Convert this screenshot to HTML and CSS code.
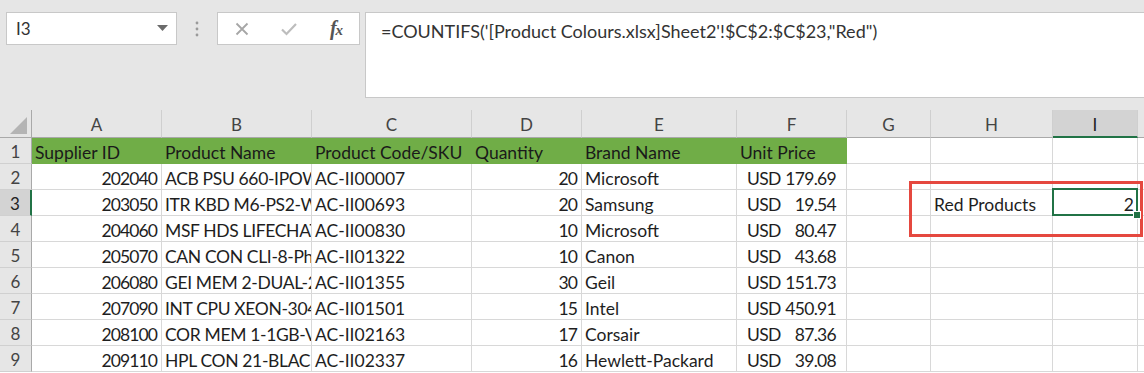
FILE: index.html
```html
<!DOCTYPE html>
<html>
<head>
<meta charset="utf-8">
<link rel="stylesheet" href="styles.css">
</head>
<body>
<div class="app">
  <div class="toolbar">
    <div class="namebox">
      <span class="nb-text">I3</span>
      <svg class="nb-arrow" width="11" height="6" viewBox="0 0 11 6"><polygon points="0,0 11,0 5.5,6" fill="#6b6b6b"/></svg>
    </div>
    <div class="sep">
      <svg width="4" height="16" viewBox="0 0 4 16"><circle cx="2" cy="2" r="1.4" fill="#9a9a9a"/><circle cx="2" cy="8" r="1.4" fill="#9a9a9a"/><circle cx="2" cy="14" r="1.4" fill="#9a9a9a"/></svg>
    </div>
    <div class="fxbar">
      <span class="fxbtn"><svg width="16" height="16" viewBox="0 0 16 16"><path d="M2.5 2.5 L13.5 13.5 M13.5 2.5 L2.5 13.5" stroke="#a6a6a6" stroke-width="1.8" fill="none"/></svg></span>
      <span class="fxbtn"><svg width="18" height="16" viewBox="0 0 18 16"><path d="M2 8.5 L6.5 13 L16 3" stroke="#bdbdbd" stroke-width="2.2" fill="none"/></svg></span>
      <span class="fxbtn fx">f<span class="fx-x">x</span></span>
    </div>
    <div class="formula">=COUNTIFS('[Product Colours.xlsx]Sheet2'!$C$2:$C$23,"Red")</div>
  </div>

  <div class="sheet">
    <div class="hd corner"><svg width="17" height="17" viewBox="0 0 17 17"><polygon points="17,0 17,17 0,17" fill="#b4b4b4"/></svg></div>
    <div class="hd col">A</div>
    <div class="hd col">B</div>
    <div class="hd col">C</div>
    <div class="hd col">D</div>
    <div class="hd col">E</div>
    <div class="hd col">F</div>
    <div class="hd col">G</div>
    <div class="hd col">H</div>
    <div class="hd col sel-col">I</div>
    <div class="hd col last"></div>

    <div class="hd row">1</div>
    <div class="c g">Supplier ID</div>
    <div class="c g">Product Name</div>
    <div class="c g">Product Code/SKU</div>
    <div class="c g">Quantity</div>
    <div class="c g">Brand Name</div>
    <div class="c g">Unit Price</div>
    <div class="c"></div><div class="c"></div><div class="c"></div><div class="c"></div>

    <div class="hd row">2</div>
    <div class="c r">202040</div><div class="c n">ACB PSU 660-IPOW</div><div class="c">AC-II00007</div><div class="c r">20</div><div class="c">Microsoft</div><div class="c acc"><span>USD</span><span>179.69</span></div>
    <div class="c"></div><div class="c"></div><div class="c"></div><div class="c"></div>

    <div class="hd row sel-row">3</div>
    <div class="c r">203050</div><div class="c n">ITR KBD M6-PS2-W</div><div class="c">AC-II00693</div><div class="c r">20</div><div class="c">Samsung</div><div class="c acc"><span>USD</span><span>19.54</span></div>
    <div class="c"></div><div class="c">Red Products</div><div class="c r active">2<span class="handle"></span></div><div class="c"></div>

    <div class="hd row">4</div>
    <div class="c r">204060</div><div class="c n">MSF HDS LIFECHAT</div><div class="c">AC-II00830</div><div class="c r">10</div><div class="c">Microsoft</div><div class="c acc"><span>USD</span><span>80.47</span></div>
    <div class="c"></div><div class="c"></div><div class="c"></div><div class="c"></div>

    <div class="hd row">5</div>
    <div class="c r">205070</div><div class="c n">CAN CON CLI-8-Ph</div><div class="c">AC-II01322</div><div class="c r">10</div><div class="c">Canon</div><div class="c acc"><span>USD</span><span>43.68</span></div>
    <div class="c"></div><div class="c"></div><div class="c"></div><div class="c"></div>

    <div class="hd row">6</div>
    <div class="c r">206080</div><div class="c n">GEI MEM 2-DUAL-2</div><div class="c">AC-II01355</div><div class="c r">30</div><div class="c">Geil</div><div class="c acc"><span>USD</span><span>151.73</span></div>
    <div class="c"></div><div class="c"></div><div class="c"></div><div class="c"></div>

    <div class="hd row">7</div>
    <div class="c r">207090</div><div class="c n">INT CPU XEON-304</div><div class="c">AC-II01501</div><div class="c r">15</div><div class="c">Intel</div><div class="c acc"><span>USD</span><span>450.91</span></div>
    <div class="c"></div><div class="c"></div><div class="c"></div><div class="c"></div>

    <div class="hd row">8</div>
    <div class="c r">208100</div><div class="c n">COR MEM 1-1GB-V</div><div class="c">AC-II02163</div><div class="c r">17</div><div class="c">Corsair</div><div class="c acc"><span>USD</span><span>87.36</span></div>
    <div class="c"></div><div class="c"></div><div class="c"></div><div class="c"></div>

    <div class="hd row">9</div>
    <div class="c r">209110</div><div class="c n">HPL CON 21-BLACK</div><div class="c">AC-II02337</div><div class="c r">16</div><div class="c">Hewlett-Packard</div><div class="c acc"><span>USD</span><span>39.08</span></div>
    <div class="c"></div><div class="c"></div><div class="c"></div><div class="c"></div>

    <div class="callout"></div>
  </div>
</div>
</body>
</html>
```

FILE: styles.css
```css
html, body {
  margin: 0;
  padding: 0;
  background: #ffffff;
}
.app {
  width: 1144px;
  height: 373px;
  overflow: hidden;
  font-family: Lato, "Liberation Sans", sans-serif;
  color: #222;
}
.toolbar {
  height: 110px;
  box-sizing: border-box;
  padding-top: 12px;
  background: #e6e6e6;
  display: flex;
  align-items: flex-start;
}
.namebox {
  margin-left: 6px;
  width: 171px;
  height: 33px;
  box-sizing: border-box;
  border: 1px solid #c8c8c8;
  background: #fff;
  display: flex;
  align-items: center;
  justify-content: space-between;
  padding: 0 8px 0 9px;
}
.nb-text {
  font-size: 17px;
  color: #333;
}
.nb-arrow {
  margin-top: -1px;
}
.sep {
  width: 40px;
  height: 33px;
  display: flex;
  align-items: center;
  justify-content: center;
}
.fxbar {
  width: 143px;
  height: 33px;
  box-sizing: border-box;
  border: 1px solid #c8c8c8;
  background: #fff;
  display: flex;
  align-items: center;
  gap: 23px;
  padding-left: 12px;
}
.fxbtn {
  width: 24px;
  height: 24px;
  display: flex;
  align-items: center;
  justify-content: center;
}
.fx {
  font-family: "Liberation Serif", serif;
  font-style: italic;
  font-weight: bold;
  font-size: 20px;
  color: #555;
  letter-spacing: -1px;
}
.fx-x {
  font-size: 15px;
  position: relative;
  top: 2px;
}
.formula {
  margin-left: 5px;
  flex: 1;
  height: 86px;
  box-sizing: border-box;
  border: 1px solid #c8c8c8;
  border-right: none;
  background: #fff;
  padding: 7px 0 0 15px;
  font-size: 18px;
  line-height: 22px;
  color: #333;
  white-space: nowrap;
}
.sheet {
  position: relative;
  display: grid;
  grid-template-columns: 32px 130px 150px 160px 110px 155px 110px 84px 122px 85px 1fr;
  grid-template-rows: 28px;
  grid-auto-rows: 26px;
  font-size: 17.5px;
}
.hd {
  background: #e6e6e6;
  color: #444;
  box-sizing: border-box;
  display: flex;
  align-items: center;
  justify-content: center;
  font-size: 17px;
}
.corner {
  border-right: 1px solid #a9a9a9;
  border-bottom: 1px solid #a9a9a9;
  justify-content: flex-end;
  align-items: flex-end;
  padding: 0 4px 3px 0;
}
.col {
  border-right: 1px solid #cfcfcf;
  border-bottom: 1px solid #a9a9a9;
  padding-top: 2px;
}
.col.last {
  border-right: none;
}
.sel-col {
  background: #d3d3d3;
  border-bottom: 2px solid #217346;
  color: #222;
}
.row {
  border-right: 1px solid #a9a9a9;
  border-bottom: 1px solid #d0d0d0;
  padding-top: 2px;
}
.sel-row {
  background: #d3d3d3;
  border-right: 2px solid #217346;
  color: #222;
}
.c {
  box-sizing: border-box;
  border-right: 1px solid #d8d8d8;
  border-bottom: 1px solid #d8d8d8;
  white-space: nowrap;
  overflow: hidden;
  padding: 3px 3px 0 3px;
  display: flex;
  align-items: center;
  color: #1e1e1e;
}
.c.n {
  letter-spacing: -0.35px;
}
.c.g {
  background: #70ad47;
  border-right-color: #70ad47;
  border-bottom-color: #70ad47;
  color: #1a1a1a;
}
.c.r {
  justify-content: flex-end;
  padding-right: 4px;
  letter-spacing: -0.9px;
}
.c.acc {
  justify-content: space-between;
  padding: 3px 10px 0 10px;
  letter-spacing: -0.7px;
}
.active {
  position: relative;
  overflow: visible;
  padding-right: 5px;
}
.active::before {
  content: "";
  position: absolute;
  top: -2px;
  left: -1px;
  right: -1px;
  bottom: -1px;
  border: 2px solid #217346;
}
.handle {
  position: absolute;
  right: -4px;
  bottom: -4px;
  width: 6px;
  height: 6px;
  background: #217346;
  border: 1px solid #fff;
  z-index: 2;
}
.callout {
  position: absolute;
  left: 909px;
  top: 71px;
  width: 234px;
  height: 56px;
  box-sizing: border-box;
  border: 3px solid #e5483f;
  pointer-events: none;
}
```
